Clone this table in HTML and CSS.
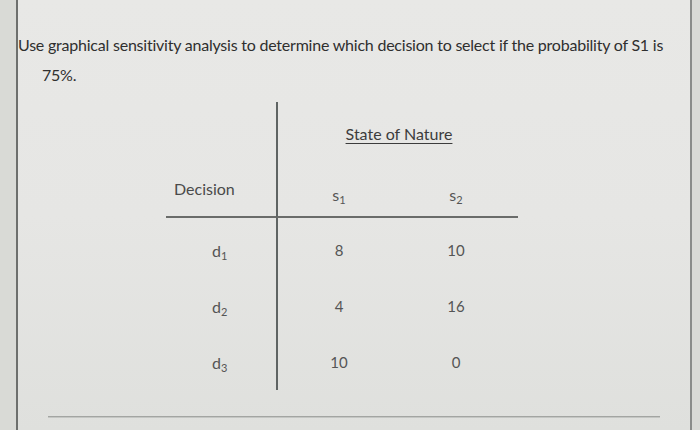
FILE: index.html
```html
<!DOCTYPE html>
<html>
<head>
<meta charset="utf-8">
<link rel="stylesheet" href="styles.css">
</head>
<body>
<div class="page">
  <div class="frame">
    <p class="question">Use graphical sensitivity analysis to determine which decision to select if the probability of S1 is</p>
    <p class="question indent">75%.</p>
    <div class="table">
      <div class="cell blank"></div>
      <div class="cell nature divider"><span class="u">State of Nature</span></div>

      <div class="cell head left"><span>Decision</span></div>
      <div class="cell head divider"><span>s<sub>1</sub></span></div>
      <div class="cell head c3"><span>s<sub>2</sub></span></div>

      <div class="cell row first dcol"><span>d<sub>1</sub></span></div>
      <div class="cell row first divider"><span>8</span></div>
      <div class="cell row first c3"><span>10</span></div>

      <div class="cell row dcol"><span>d<sub>2</sub></span></div>
      <div class="cell row divider"><span>4</span></div>
      <div class="cell row c3"><span>16</span></div>

      <div class="cell row dcol"><span>d<sub>3</sub></span></div>
      <div class="cell row divider"><span>10</span></div>
      <div class="cell row c3"><span>0</span></div>
    </div>
    <div class="rule"></div>
  </div>
</div>
</body>
</html>
```

FILE: styles.css
```css
html, body {
  margin: 0;
  padding: 0;
}
body {
  width: 700px;
  height: 430px;
  overflow: hidden;
  background: #d9dad6;
  font-family: Lato, "Open Sans", sans-serif;
}
.page {
  padding-left: 16px;
  height: 430px;
}
.frame {
  width: 676px;
  height: 430px;
  box-sizing: border-box;
  border-left: 2px solid #6d6f6d;
  border-right: 2px solid #8a8c8a;
  background: linear-gradient(180deg, #e8e8e6 0%, #e6e6e4 50%, #dfe0dd 100%);
  padding-top: 35px;
  position: relative;
}
.question {
  margin: 0;
  font-size: 16px;
  line-height: 20px;
  color: #2f2f2f;
  letter-spacing: -0.22px;
  white-space: nowrap;
}
.question.indent {
  padding-left: 24px;
  margin-top: 10px;
}
.table {
  margin-top: 17px;
  margin-left: 148px;
  display: grid;
  grid-template-columns: 110px 124px 118px;
  grid-template-rows: 62px 54px 60px 56px 56px;
  color: #555555;
  font-size: 15px;
}
.cell {
  display: flex;
  align-items: center;
  justify-content: center;
}
.blank {
  grid-column: 1;
}
.nature {
  grid-column: 2 / span 2;
  font-size: 16px;
  color: #3c3c3c;
  padding-left: 2px;
}
.u {
  text-decoration: underline;
  text-underline-offset: 3px;
  text-decoration-thickness: 1px;
}
.divider {
  border-left: 2px solid #5f6463;
}
.head {
  border-bottom: 2px solid #6a6c6a;
  padding-top: 2px;
}
.head.left {
  justify-content: flex-start;
  padding-left: 8px;
  padding-bottom: 6px;
  font-size: 16px;
  color: #4a4a4a;
}
.head.divider, .head.c3 {
  padding-top: 8px;
  font-size: 16px;
}
.c3 {
  padding-right: 6px;
}
.row.first {
  padding-top: 4px;
}
.dcol {
  justify-content: flex-start;
  padding-left: 46px;
  font-size: 16px;
}
sub {
  font-size: 11px;
  vertical-align: -3px;
  line-height: 0;
}
.rule {
  position: absolute;
  left: 30px;
  top: 416px;
  width: 612px;
  height: 1px;
  background: #a3a5a2;
  border-bottom: 1px solid #c4c6c3;
}
```
